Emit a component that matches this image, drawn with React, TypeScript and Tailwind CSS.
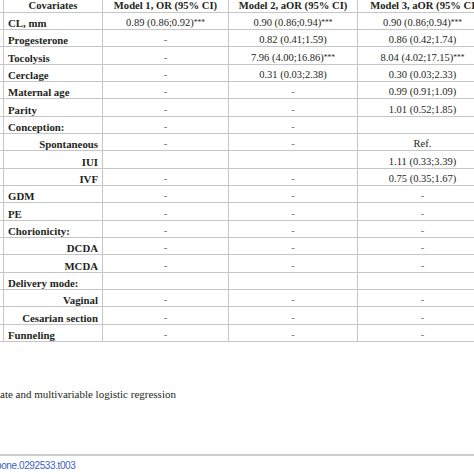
import React from 'react';

type Row = {
  label: string;
  indent?: boolean;
  m1: string;
  m2: string;
  m3: string;
};

const rows: Row[] = [
  { label: 'CL, mm', m1: '0.89 (0.86;0.92)***', m2: '0.90 (0.86;0.94)***', m3: '0.90 (0.86;0.94)***' },
  { label: 'Progesterone', m1: '-', m2: '0.82 (0.41;1.59)', m3: '0.86 (0.42;1.74)' },
  { label: 'Tocolysis', m1: '-', m2: '7.96 (4.00;16.86)***', m3: '8.04 (4.02;17.15)***' },
  { label: 'Cerclage', m1: '-', m2: '0.31 (0.03;2.38)', m3: '0.30 (0.03;2.33)' },
  { label: 'Maternal age', m1: '-', m2: '-', m3: '0.99 (0.91;1.09)' },
  { label: 'Parity', m1: '-', m2: '-', m3: '1.01 (0.52;1.85)' },
  { label: 'Conception:', m1: '-', m2: '-', m3: '' },
  { label: 'Spontaneous', indent: true, m1: '-', m2: '-', m3: 'Ref.' },
  { label: 'IUI', indent: true, m1: '', m2: '', m3: '1.11 (0.33;3.39)' },
  { label: 'IVF', indent: true, m1: '-', m2: '-', m3: '0.75 (0.35;1.67)' },
  { label: 'GDM', m1: '-', m2: '-', m3: '-' },
  { label: 'PE', m1: '-', m2: '-', m3: '-' },
  { label: 'Chorionicity:', m1: '-', m2: '-', m3: '-' },
  { label: 'DCDA', indent: true, m1: '-', m2: '-', m3: '-' },
  { label: 'MCDA', indent: true, m1: '-', m2: '-', m3: '-' },
  { label: 'Delivery mode:', m1: '', m2: '', m3: '' },
  { label: 'Vaginal', indent: true, m1: '-', m2: '-', m3: '-' },
  { label: 'Cesarian section', indent: true, m1: '-', m2: '-', m3: '-' },
  { label: 'Funneling', m1: '-', m2: '-', m3: '-' },
];

const Value: React.FC<{ text: string }> = ({ text }) => {
  if (text === '-') {
    return <span className="text-[#6b6b6b]">-</span>;
  }
  if (text.endsWith('***')) {
    return (
      <span>
        {text.slice(0, -3)}
        <sup className="text-[7.5px] relative -top-[1px]">***</sup>
      </span>
    );
  }
  return <span>{text}</span>;
};

const grid = 'grid grid-cols-[3px_99px_126px_129px_130px] w-[487px] border-b border-[#c6c6c6]';
const cell = 'flex items-end justify-center border-l border-[#c6c6c6] leading-[12px] whitespace-nowrap';

export default function App() {
  return (
    <div
      className="w-[474px] h-[474px] overflow-hidden bg-white text-[#231f20] text-[10.5px]"
      style={{ fontFamily: '"Liberation Serif", "Times New Roman", serif' }}
    >
      <div className={`${grid} h-[12.5px] font-bold text-[10.6px]`}>
        <div />
        <div className={cell}>Covariates</div>
        <div className={cell}>Model 1, OR (95% CI)</div>
        <div className={cell}>Model 2, aOR (95% CI)</div>
        <div className={`${cell} pl-[4px]`}>Model 3, aOR (95% CI)</div>
      </div>
      {rows.map((r) => (
        <div key={r.label} className={`${grid} h-[17.35px]`}>
          <div />
          <div
            className={`flex items-end border-l border-[#c6c6c6] leading-[12px] font-bold text-[10.8px] whitespace-nowrap ${
              r.indent ? 'justify-end pr-[4px]' : 'pl-[4px]'
            }`}
          >
            {r.label}
          </div>
          <div className={cell}>
            <Value text={r.m1} />
          </div>
          <div className={cell}>
            <Value text={r.m2} />
          </div>
          <div className={cell}>
            <Value text={r.m3} />
          </div>
        </div>
      ))}

      <p className="mt-[46px] leading-[12px] text-[11px] whitespace-nowrap">ate and multivariable logistic regression</p>

      <div className="mt-[54px] h-[2px] bg-[#cccccc]" />

      <p
        className="mt-[4px] leading-[12px] text-[10px] tracking-[-0.4px] text-[#3d5fc4] whitespace-nowrap -ml-[4px]"
        style={{ fontFamily: '"Liberation Sans Narrow", "Liberation Sans", Arial, sans-serif' }}
      >
        pone.0292533.t003
      </p>
    </div>
  );
}
